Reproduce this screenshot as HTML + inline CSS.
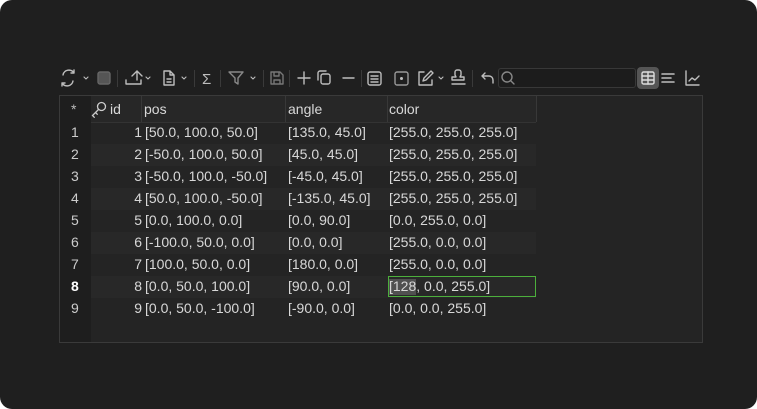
<!DOCTYPE html><html><head><style>
body{margin:0;width:757px;height:409px;background:#fff;overflow:hidden;font-family:"Liberation Sans",sans-serif}
#w{position:absolute;left:0;top:0;width:757px;height:409px;background:#1f1f1f;border-radius:12px;overflow:hidden}
.a{position:absolute}
svg{position:absolute;overflow:visible}
.t{position:absolute;font-size:14px;color:#d8d8d8;white-space:nowrap;line-height:22px}
.sep{position:absolute;top:70px;width:1px;height:17px;background:#3a3a3a}
</style></head><body><div id="w">
<div class="a" style="left:498px;top:68px;width:136px;height:18px;border:1px solid #383838;border-radius:3px;background:#1c1c1c"></div>
<div class="a" style="left:637px;top:67px;width:22px;height:22px;border-radius:4px;background:#555"></div>
<svg width="757" height="409" style="left:0;top:0" fill="none" stroke="#bdbdbd" stroke-width="1.4" stroke-linecap="round" stroke-linejoin="round">
<path d="M74 73a6 6 0 0 0-11 2M62 83a6 6 0 0 0 11-2M74 70v3h-3M62 86v-3h3"/>
<path d="M84 77l2 2 2-2M146 77l2 2 2-2M182 77l2 2 2-2M251 77l2 2 2-2M439 77l2 2 2-2" stroke-width="1.1"/>
<rect x="98" y="72" width="12" height="12" rx="2" fill="#555" stroke="#666"/>
<path d="M132 76l5-5 5 5M137 71v9M126 80v4h15v-4"/>
<path d="M164 71h6l4 4v10h-10zM170 71v4h4M167 79h4M167 82h4"/>
<text x="202" y="84" fill="#bdbdbd" stroke="none" font-size="15" font-family="Liberation Sans">Σ</text>
<path d="M229 72h14l-5 6v6l-3-2v-4z" stroke="#888"/>
<path d="M271 72h9l3 3v9h-12zM274 72v4h5v-4M274 84v-4h6v4" stroke="#777"/>
<path d="M298 78h12M304 72v12"/>
<rect x="321" y="74" width="9" height="10" rx="2"/><path d="M318 80v-7a2 2 0 0 1 2-2h6"/>
<path d="M343 78h11"/>
<rect x="368" y="72" width="13" height="13" rx="2"/><path d="M371 76h7M371 79h7M371 82h7"/>
<rect x="395" y="72" width="13" height="13" rx="2" stroke="#999"/><circle cx="401.5" cy="78.5" r=".8" fill="#bbb"/>
<path d="M424 72h-5v13h13v-5M423 81l1-3 7-7 2 2-7 7z"/>
<path d="M459 70a2 2 0 0 1 2 2v3l-1 2h4v3h-12v-3h4l-1-2v-3a2 2 0 0 1 2-2zM452 84h13"/>
<path d="M482 76h7a4 4 0 0 1 4 4v3M482 76l3-3M482 76l3 3"/>
<circle cx="507" cy="77" r="5" stroke="#888"/><path d="M511 81l3 3" stroke="#888"/>
<path d="M662 74h12M662 78h9M662 82h12" stroke-width="1.6"/>
<path d="M686 71v14h13M689 81l3-3 3 2 4-4" />
<rect x="642" y="72" width="12" height="12" rx="1.5" stroke="#ddd"/><path d="M642 76h12M642 80h12M648 72v12" stroke="#ddd"/>
</svg>
<div class="sep" style="left:117px"></div><div class="sep" style="left:194px"></div><div class="sep" style="left:220px"></div><div class="sep" style="left:263px"></div><div class="sep" style="left:289px"></div><div class="sep" style="left:361px"></div><div class="sep" style="left:472px"></div>
<div class="a" style="left:59px;top:95px;width:642px;height:246px;border:1px solid #3a3a3a;background:#242424"></div>
<div class="a" style="left:60px;top:96px;width:31px;height:246px;background:#1e1e1e"></div>
<div class="a" style="left:91px;top:96px;width:445px;height:26px;background:#272727;border-bottom:1px solid #333"></div>
<div class="a" style="left:141px;top:96px;width:1px;height:26px;background:#383838"></div>
<div class="a" style="left:285px;top:96px;width:1px;height:26px;background:#383838"></div>
<div class="a" style="left:387px;top:96px;width:1px;height:26px;background:#383838"></div>
<div class="a" style="left:536px;top:96px;width:1px;height:26px;background:#383838"></div>
<div class="a" style="left:91px;top:144px;width:445px;height:22px;background:#282828"></div>
<div class="a" style="left:91px;top:188px;width:445px;height:22px;background:#282828"></div>
<div class="a" style="left:91px;top:232px;width:445px;height:22px;background:#282828"></div>
<div class="a" style="left:91px;top:276px;width:445px;height:22px;background:#282828"></div>
<div class="t" style="left:71px;top:98px;color:#bbb">*</div>
<svg width="20" height="20" style="left:91px;top:100px" fill="none" stroke="#ccc" stroke-width="1.3" stroke-linecap="round"><circle cx="10.5" cy="6.5" r="4"/><path d="M7.5 9.5l-6 6 1.8 1.8M4.5 12.5l1.8 1.8"/></svg>
<div class="t" style="left:110px;top:98px">id</div><div class="t" style="left:144px;top:98px">pos</div><div class="t" style="left:288px;top:98px">angle</div><div class="t" style="left:389px;top:98px">color</div>
<div class="a" style="left:389px;top:279px;width:27px;height:16px;background:#505050"></div>
<div class="a" style="left:388px;top:276px;width:146px;height:19px;border:1px solid #4caf3c"></div>
<div id="rows"></div>
<script>
var d=[["[50.0, 100.0, 50.0]","[135.0, 45.0]","[255.0, 255.0, 255.0]"],["[-50.0, 100.0, 50.0]","[45.0, 45.0]","[255.0, 255.0, 255.0]"],["[-50.0, 100.0, -50.0]","[-45.0, 45.0]","[255.0, 255.0, 255.0]"],["[50.0, 100.0, -50.0]","[-135.0, 45.0]","[255.0, 255.0, 255.0]"],["[0.0, 100.0, 0.0]","[0.0, 90.0]","[0.0, 255.0, 0.0]"],["[-100.0, 50.0, 0.0]","[0.0, 0.0]","[255.0, 0.0, 0.0]"],["[100.0, 50.0, 0.0]","[180.0, 0.0]","[255.0, 0.0, 0.0]"],["[0.0, 50.0, 100.0]","[90.0, 0.0]","[128, 0.0, 255.0]"],["[0.0, 50.0, -100.0]","[-90.0, 0.0]","[0.0, 0.0, 255.0]"]];
var h="";d.forEach(function(r,i){var y=121+i*22;
h+='<div class="t" style="left:71px;top:'+y+'px;'+(i==7?'font-weight:bold;color:#fff':'color:#ccc')+'">'+(i+1)+'</div>';
h+='<div class="t" style="left:91px;width:51px;text-align:right;top:'+y+'px">'+(i+1)+'</div>';
h+='<div class="t" style="left:145px;top:'+y+'px">'+r[0]+'</div><div class="t" style="left:288px;top:'+y+'px">'+r[1]+'</div><div class="t" style="left:389px;top:'+y+'px">'+r[2]+'</div>';});
document.getElementById("rows").innerHTML=h;
</script>
</div></body></html>
